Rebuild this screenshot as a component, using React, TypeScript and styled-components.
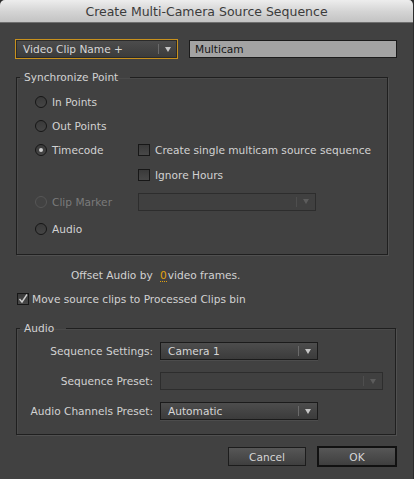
import styled, { createGlobalStyle } from 'styled-components';

const GlobalStyle = createGlobalStyle`
    html, body {
        margin: 0;
        padding: 0;
        background: #2b2b2b;
    }
    * {
        box-sizing: border-box;
    }
`;

const Window = styled.div`
    width: 414px;
    height: 479px;
    background: #414141;
    border-radius: 5px 5px 0 0;
    overflow: hidden;
    font-family: 'DejaVu Sans', 'Liberation Sans', sans-serif;
    font-size: 10.6px;
    color: #d2d2d2;
    border-right: 1px solid #2c2c2c;
`;

const TitleBar = styled.div`
    height: 23px;
    display: flex;
    align-items: center;
    justify-content: center;
    background: linear-gradient(#ededed, #d3d3d3 55%, #c3c3c3);
    border-bottom: 1px solid #6e6e6e;
    color: #3b3b3b;
    font-size: 12.5px;
`;

const Content = styled.div`
    padding: 16px 16px 0 15px;
    display: flex;
    flex-direction: column;
`;

const TopRow = styled.div`
    display: flex;
    align-items: center;
    gap: 11px;
    height: 20px;
`;

const SelectBox = styled.div<{ $width: number; $height?: number; $focused?: boolean; $disabled?: boolean }>`
    width: ${p => p.$width}px;
    height: ${p => p.$height ?? 18}px;
    display: flex;
    align-items: center;
    border: 1px solid ${p => (p.$focused ? '#c8911d' : p.$disabled ? '#2d2d2d' : '#1b1b1b')};
    background: ${p => (p.$disabled ? '#404040' : 'linear-gradient(#4d4d4d, #3b3b3b)')};
    box-shadow: ${p => (p.$focused ? 'inset 0 0 0 1px #2a2a2a' : p.$disabled ? 'none' : '0 1px 0 #4c4c4c')};
    color: #d6d6d6;
`;

const SelectText = styled.span`
    flex: 1;
    padding-left: 7px;
    white-space: nowrap;
    overflow: hidden;
`;

const ArrowPart = styled.span<{ $disabled?: boolean }>`
    width: 19px;
    height: 10px;
    display: flex;
    align-items: center;
    justify-content: center;
    border-left: 1px solid ${p => (p.$disabled ? '#4e4e4e' : '#6a6a6a')};
    &::after {
        content: '';
        border-left: 3.5px solid transparent;
        border-right: 3.5px solid transparent;
        border-top: 5px solid ${p => (p.$disabled ? '#5c5c5c' : '#c6c6c6')};
    }
`;

const TextField = styled.div`
    flex: 1;
    height: 18px;
    background: #a3a3a3;
    border: 1px solid #1b1b1b;
    color: #161616;
    display: flex;
    align-items: center;
    padding-left: 5px;
`;

const Group = styled.fieldset<{ $right: number; $top: number; $padTop: number; $padBottom: number }>`
    margin: ${p => p.$top}px ${p => p.$right - 15}px 0 1px;
    padding: ${p => p.$padTop}px 10px ${p => p.$padBottom}px 3px;
    border: 1px solid #1f1f1f;
    box-shadow: 1px 1px 0 #505050, inset 1px 1px 0 #4a4a4a;
    min-width: 0;
`;

const Legend = styled.legend`
    padding: 0 12px 0 4px;
    line-height: 13px;
    color: #d2d2d2;
`;

const SyncGrid = styled.div`
    display: grid;
    grid-template-columns: 103px 1fr;
    margin-left: 15px;
`;

const Cell = styled.div<{ $h: number }>`
    height: ${p => p.$h}px;
    display: flex;
    align-items: center;
    gap: 5px;
`;

const RadioDot = styled.span<{ $checked?: boolean; $disabled?: boolean }>`
    width: 12px;
    height: 12px;
    border-radius: 50%;
    border: 1px solid ${p => (p.$disabled ? '#565656' : '#161616')};
    background: ${p => (p.$disabled ? '#424242' : 'linear-gradient(#3a3a3a, #454545)')};
    display: flex;
    align-items: center;
    justify-content: center;
    flex: none;
    &::after {
        content: '';
        display: ${p => (p.$checked ? 'block' : 'none')};
        width: 4px;
        height: 4px;
        border-radius: 50%;
        background: #cfcfcf;
    }
`;

const Box = styled.span`
    width: 12px;
    height: 12px;
    border: 1px solid #171717;
    background: linear-gradient(#3a3a3a, #484848);
    display: flex;
    align-items: center;
    justify-content: center;
    flex: none;
`;

const Label = styled.span<{ $disabled?: boolean }>`
    color: ${p => (p.$disabled ? '#7b7b7b' : '#d2d2d2')};
    white-space: nowrap;
`;

const OffsetRow = styled.div`
    height: 16px;
    margin-top: 12px;
    padding-left: 56px;
    display: flex;
    align-items: center;
    white-space: pre;
`;

const OffsetValue = styled.span`
    color: #e3a20f;
    border-bottom: 1px dotted #e3a20f;
    line-height: 12px;
    margin: 0 1px 0 4px;
`;

const MoveRow = styled.div`
    height: 16px;
    margin: 8px 0 0 2px;
    display: flex;
    align-items: center;
    gap: 3px;
`;

const AudioGrid = styled.div`
    display: grid;
    grid-template-columns: 133px auto;
    column-gap: 7px;
    justify-content: start;
`;

const FieldLabel = styled.div`
    height: 30px;
    display: flex;
    align-items: center;
    justify-content: flex-end;
    white-space: nowrap;
    color: #d2d2d2;
`;

const FieldCell = styled.div`
    height: 30px;
    display: flex;
    align-items: center;
`;

const Buttons = styled.div`
    display: flex;
    justify-content: flex-end;
    align-items: center;
    gap: 11px;
    margin-top: 11px;
    height: 21px;
`;

const Button = styled.div<{ $primary?: boolean }>`
    width: ${p => (p.$primary ? 80 : 78)}px;
    height: ${p => (p.$primary ? 21 : 19)}px;
    display: flex;
    align-items: center;
    justify-content: center;
    border: ${p => (p.$primary ? '2px solid #111' : '1px solid #1c1c1c')};
    background: linear-gradient(#575757, #3f3f3f);
    color: #d6d6d6;
`;

const Select = ({ width, text, focused, disabled, height }: { width: number; text?: string; focused?: boolean; disabled?: boolean; height?: number }) => (
    <SelectBox $width={width} $focused={focused} $disabled={disabled} $height={height}>
        <SelectText>{text}</SelectText>
        <ArrowPart $disabled={disabled} />
    </SelectBox>
);

const Check = () => (
    <svg width="10" height="10" viewBox="0 0 10 10">
        <path d="M1.5 5 L4 8 L9 0.5" fill="none" stroke="#cfcfcf" strokeWidth="1.4" />
    </svg>
);

const App = () => {
    return (
        <>
            <GlobalStyle />
            <Window>
                <TitleBar>Create Multi-Camera Source Sequence</TitleBar>
                <Content>
                    <TopRow>
                        <Select width={163} height={20} text="Video Clip Name +" focused />
                        <TextField>Multicam</TextField>
                    </TopRow>

                    <Group $right={24} $top={12} $padTop={5} $padBottom={12}>
                        <Legend>Synchronize Point</Legend>
                        <SyncGrid>
                            <Cell $h={25}><RadioDot /><Label>In Points</Label></Cell>
                            <Cell $h={25} />
                            <Cell $h={24}><RadioDot /><Label>Out Points</Label></Cell>
                            <Cell $h={24} />
                            <Cell $h={24}><RadioDot $checked /><Label>Timecode</Label></Cell>
                            <Cell $h={24}><Box /><Label>Create single multicam source sequence</Label></Cell>
                            <Cell $h={26} />
                            <Cell $h={26}><Box /><Label>Ignore Hours</Label></Cell>
                            <Cell $h={27}><RadioDot $disabled /><Label $disabled>Clip Marker</Label></Cell>
                            <Cell $h={27}><Select width={178} disabled /></Cell>
                            <Cell $h={27}><RadioDot /><Label>Audio</Label></Cell>
                            <Cell $h={27} />
                        </SyncGrid>
                    </Group>

                    <OffsetRow>
                        Offset Audio by <OffsetValue>0</OffsetValue>video frames.
                    </OffsetRow>

                    <MoveRow>
                        <Box><Check /></Box>
                        <Label>Move source clips to Processed Clips bin</Label>
                    </MoveRow>

                    <Group $right={16} $top={15} $padTop={1} $padBottom={8}>
                        <Legend>Audio</Legend>
                        <AudioGrid>
                            <FieldLabel>Sequence Settings:</FieldLabel>
                            <FieldCell><Select width={158} text="Camera 1" /></FieldCell>
                            <FieldLabel>Sequence Preset:</FieldLabel>
                            <FieldCell><Select width={223} disabled /></FieldCell>
                            <FieldLabel>Audio Channels Preset:</FieldLabel>
                            <FieldCell><Select width={158} text="Automatic" /></FieldCell>
                        </AudioGrid>
                    </Group>

                    <Buttons>
                        <Button>Cancel</Button>
                        <Button $primary>OK</Button>
                    </Buttons>
                </Content>
            </Window>
        </>
    );
};

export default App;
